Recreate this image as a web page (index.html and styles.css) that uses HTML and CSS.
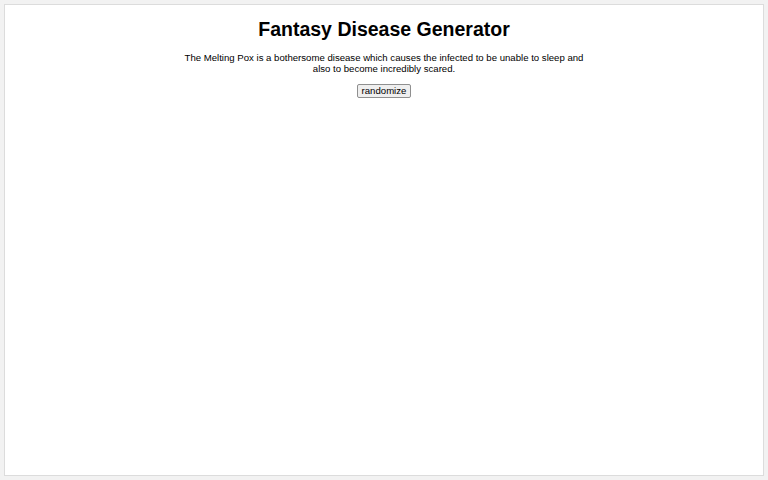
FILE: index.html
```html
<!DOCTYPE html>
<html lang="en">
<head>
  <meta charset="UTF-8">
  <meta name="viewport" content="width=device-width, initial-scale=1.0">
  <title>Fantasy Disease Generator</title>
  <link rel="stylesheet" href="styles.css">
</head>
<body>
  <main class="card">
    <h1>Fantasy Disease Generator</h1>
    <p id="disease" class="description">The Melting Pox is a bothersome disease which causes the infected to be unable to sleep and also to become incredibly scared.</p>
    <button type="button" id="randomize-btn">randomize</button>
  </main>

  <script>
    const adjectives = ['Melting', 'Screaming', 'Purple', 'Weeping', 'Hollow'];
    const nouns = ['Pox', 'Rot', 'Fever', 'Plague', 'Blight'];
    const severity = ['bothersome', 'deadly', 'mild', 'terrible', 'curious'];
    const effects = [
      'to be unable to sleep',
      'to sneeze constantly',
      'to forget their own name',
      'to crave raw onions',
      'to speak only in rhymes'
    ];
    const extras = [
      'to become incredibly scared',
      'to grow green hair',
      'to glow faintly at night',
      'to lose their sense of taste',
      'to hiccup uncontrollably'
    ];

    const pick = list => list[Math.floor(Math.random() * list.length)];

    document.getElementById('randomize-btn').addEventListener('click', () => {
      const sev = pick(severity);
      const article = /^[aeiou]/.test(sev) ? 'an' : 'a';
      document.getElementById('disease').textContent =
        `The ${pick(adjectives)} ${pick(nouns)} is ${article} ${sev} disease which causes the infected ${pick(effects)} and also ${pick(extras)}.`;
    });
  </script>
</body>
</html>
```

FILE: styles.css
```css
/* General Reset */
* {
  margin: 0;
  padding: 0;
  box-sizing: border-box;
}

body {
  background: #f2f2f2;
  font-family: 'Liberation Sans', Arial, sans-serif;
  color: #000;
  padding: 4px;
}

/* Card */
.card {
  background: white;
  border: 1px solid #dcdcdc;
  height: 472px;
  text-align: center;
  padding-top: 13px;
}

h1 {
  font-size: 19.5px;
  line-height: 22px;
  font-weight: bold;
  margin-bottom: 12px;
}

.description {
  font-size: 9.6px;
  line-height: 11px;
  max-width: 402px;
  margin: 0 auto 6px;
}

button {
  font-family: 'Liberation Sans', Arial, sans-serif;
  font-size: 9.6px;
  line-height: 12px;
  padding: 0 4px;
  background: #efefef;
  border: 1px solid #8f8f8f;
  border-radius: 2px;
  color: #000;
}
```
